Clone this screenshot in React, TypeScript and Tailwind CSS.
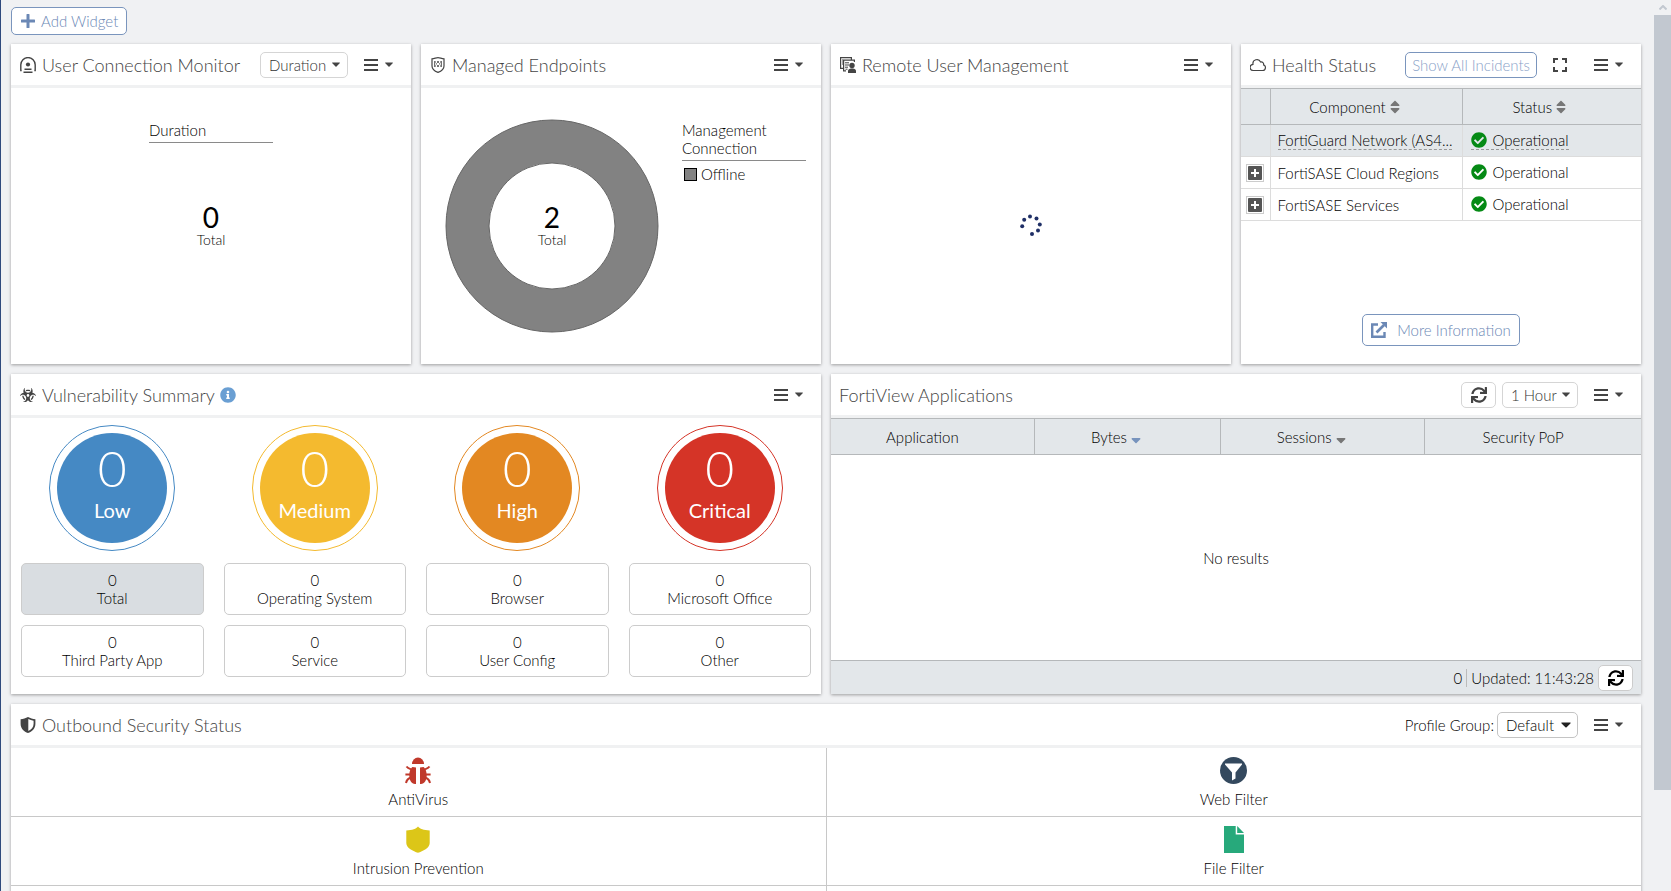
import React from "react";

import {
  FaBiohazard,
  FaCheckCircle,
  FaInfoCircle,
  FaSort,
  FaSortDown,
  FaSync,
} from "react-icons/fa";

type TIconProps = {
  className?: string;
};

type TWidgetProps = {
  title: string;
  icon?: React.ReactNode;
  info?: boolean;
  className?: string;
  actions?: React.ReactNode;
  children: React.ReactNode;
};

type TSelectBoxProps = {
  id: string;
  label: string;
  value: string;
  dark?: boolean;
};

const severities = [
  { name: "Low", ring: "border-[#4589c4]", fill: "bg-[#4589c4]" },
  { name: "Medium", ring: "border-[#f4ba2f]", fill: "bg-[#f4ba2f]" },
  { name: "High", ring: "border-[#e38822]", fill: "bg-[#e38822]" },
  { name: "Critical", ring: "border-[#d53427]", fill: "bg-[#d53427]" },
];

const categories = [
  "Total",
  "Operating System",
  "Browser",
  "Microsoft Office",
  "Third Party App",
  "Service",
  "User Config",
  "Other",
];

const components = [
  { name: "FortiGuard Network (AS4...", expandable: false },
  { name: "FortiSASE Cloud Regions", expandable: true },
  { name: "FortiSASE Services", expandable: true },
];

const Caret = ({ className }: TIconProps) => (
  <svg viewBox="0 0 8 5" className={className} fill="currentColor">
    <path d="M0.6 0.5h6.8c.5 0 .6.4.3.7L4.5 4.4c-.3.3-.7.3-1 0L.3 1.2C0 .9.1.5.6.5z" />
  </svg>
);

const MonitorIcon = () => (
  <svg viewBox="0 0 16 16" className="size-4" fill="none" stroke="currentColor">
    <path
      d="M1.7 13.500H.8V7.800a7.200 7.200 0 0 1 14.400 0v5.700h-.9"
      strokeWidth="1.400"
    />
    <circle cx="8" cy="7.500" r="2.100" fill="currentColor" stroke="none" />
    <path d="M4.500 12.300h7M3.500 15.200h9" strokeWidth="1.400" />
  </svg>
);

const EndpointIcon = () => (
  <svg viewBox="0 0 16 16" className="size-4" fill="none" stroke="currentColor">
    <path
      d="M2 1.800C4.500 1.500 6.500.6 8 .6s3.500.9 6 1.200V9c0 3-3 5.300-6 6.400C5 14.300 2 12 2 9z"
      strokeWidth="1.200"
    />
    <path
      d="M4 5h1.700M7 5h2M10.300 5H12M4 7h1.200M10.800 7H12M4 9h1.700M7 9h2M10.300 9H12M6.200 6.800h.8M9 6.800h.8"
      strokeWidth="1.300"
    />
  </svg>
);

const RemoteUserIcon = () => (
  <svg viewBox="0 0 16 16" className="size-4" fill="none" stroke="currentColor">
    <path d="M3 11.400H.6V.6h10.800V3" strokeWidth="1.200" />
    <path d="M6 13.800H3.600V3.200H14.400V5" strokeWidth="1.200" />
    <path d="M2 3h1M2 5h1M2 7h1M5 5.800h4M5 8h4M5 10.200h3M5.500 12.200h2" />
    <circle cx="12" cy="8.500" r="2.700" fill="currentColor" stroke="none" />
    <path
      d="M8 16v-2c0-1.600 1.500-2.500 3-2.500h2c1.500 0 3 .9 3 2.500v2z"
      fill="currentColor"
      stroke="none"
    />
  </svg>
);

const CloudIcon = () => (
  <svg viewBox="0 0 16 16" className="size-4" fill="none" stroke="currentColor">
    <path
      d="M3.400 13.500h9.200a2.900 2.900 0 0 0 1-5.600 2.400 2.400 0 0 0-3-2.900A4 4 0 0 0 3 7.300a3.100 3.100 0 0 0 .4 6.200z"
      strokeWidth="1.200"
    />
  </svg>
);

const ShieldHalfIcon = () => (
  <svg viewBox="0 0 16 16" className="size-4" fill="currentColor">
    <path
      fillRule="evenodd"
      d="M8 0c2.300 1.300 4.800 2 7.400 2.200v4.600C15.400 11.500 12 14.700 8 16 4 14.700.6 11.500.6 6.800V2.200C3.200 2 5.700 1.300 8 0zm.3 2v12c3-1.300 5.300-3.800 5.300-7.200V3.700C11.700 3.500 10 2.900 8.300 2z"
    />
  </svg>
);

const PlusIcon = () => (
  <svg viewBox="0 0 14 14" className="size-3.5" fill="currentColor">
    <path d="M5.500.5q0-.5.500-.5h2q.5 0 .5.500v5h5q.5 0 .5.500v2q0 .5-.5.500h-5v5q0 .5-.5.500H6q-.5 0-.5-.5v-5h-5Q0 8.500 0 8V6q0-.5.500-.5h5z" />
  </svg>
);

const ExternalIcon = () => (
  <svg viewBox="0 0 16 16" className="size-4" fill="none" stroke="currentColor">
    <path d="M7 2.500H1.200v12.300h12.300V10" strokeWidth="2.400" />
    <path d="M5.500 10.500l7.500-7.500" strokeWidth="2.600" />
    <path d="M9.500 0H16v6.500z" fill="currentColor" stroke="none" />
  </svg>
);

const ExpandIcon = () => (
  <svg viewBox="0 0 14 14" className="size-3.5" fill="none" stroke="currentColor">
    <path d="M1 5V1h4M9 1h4v4M13 9v4H9M5 13H1V9" strokeWidth="2" />
  </svg>
);

const BugIcon = () => (
  <svg viewBox="0 0 26 27" className="h-[27px] w-[26px]" fill="#c0392b">
    <path d="M7 7a6 6.500 0 0 1 12 0z" />
    <path d="M11 10.500V27H10C6.500 27 4.300 23 4.300 18.500c0-4 1.500-7.600 3.200-8.500zM15 10.500V27h1c3.500 0 5.700-4 5.700-8.500 0-4-1.500-7.600-3.200-8.500z" />
    <path
      d="M1.500 9.500c1.500 2 3 2.300 4.500 2.800M.4 17.500H5M6 20.500c-3 1-4.500 3-5 5.500M24.500 9.500c-1.500 2-3 2.300-4.500 2.800M25.600 17.500H21M20 20.500c3 1 4.500 3 5 5.500"
      fill="none"
      stroke="#c0392b"
      strokeWidth="2"
    />
  </svg>
);

const FunnelIcon = () => (
  <svg viewBox="0 0 27 27" className="size-[27px]">
    <circle cx="13.500" cy="13.500" r="13.500" fill="#34495e" />
    <path d="M5 6.500h17v1l-6.500 8v6L12 23.500v-8L5 7.500z" fill="#fff" />
  </svg>
);

const ShieldIcon = () => (
  <svg viewBox="0 0 24 27" className="h-[27px] w-6" fill="#dcc618">
    <path d="M12 .5c1.500 2.300 6 3.600 11.700 4V17c0 5-7 8.300-11.700 9.800C7.300 25.300.3 22 .3 17V4.500C6 4.100 10.500 2.800 12 .5z" />
  </svg>
);

const FileIcon = () => (
  <svg viewBox="0 0 20 27" className="h-[27px] w-5" fill="#27a97b">
    <path d="M0 0h11.700v8.500H20V27H0z" />
    <path d="M13.200 0L20 7H13.200z" />
  </svg>
);

const Spinner = () => (
  <svg viewBox="-12 -12 24 24" className="size-6" fill="#1f2f66">
    <circle cx="-1" cy="-9.500" r="2" />
    <circle cx="5.500" cy="-7.500" r="2" />
    <circle cx="8.800" cy="-1.600" r="2" />
    <circle cx="7" cy="4.600" r="2" />
    <circle cx="1" cy="8" r="2" />
    <circle cx="-8.800" cy="0.200" r="2" />
    <circle cx="-6.800" cy="-6.200" r="2" />
  </svg>
);

const MenuButton = () => (
  <button
    type="button"
    aria-label="Widget menu"
    className="flex items-center gap-[7px] text-[#444]"
  >
    <svg viewBox="0 0 14 12" className="h-3 w-3.5" fill="currentColor">
      <path d="M0 0h14v2H0zM0 5h14v2H0zM0 10h14v2H0z" />
    </svg>
    <Caret className="h-[5px] w-2" />
  </button>
);

const SelectBox = ({ id, label, value, dark }: TSelectBoxProps) => (
  <span className="relative flex items-center">
    <select
      id={id}
      aria-label={label}
      defaultValue={value}
      className={`h-[26px] appearance-none rounded-[5px] border bg-white pl-2 text-[15px] ${
        dark
          ? "border-[#c4c4c4] pr-[22px] text-black"
          : "border-[#d5d5d5] pr-5 text-[#333]"
      }`}
    >
      <option>{value}</option>
    </select>
    <Caret
      className={`pointer-events-none absolute ${
        dark
          ? "right-[7px] h-[6px] w-2.5 text-[#222]"
          : "right-2 h-[5px] w-2 text-[#444]"
      }`}
    />
  </span>
);

const Widget = ({
  title,
  icon,
  info,
  className = "",
  actions,
  children,
}: TWidgetProps) => (
  <section
    className={`flex flex-col bg-white shadow-[0_1px_3px_rgba(0,0,0,0.35)] ${className}`}
  >
    <header className="flex h-11 shrink-0 items-center border-b-[3px] border-[#f0f1f2] pr-[18px] pl-2 text-[#444]">
      {icon && <span className="mr-1.5 ml-px flex">{icon}</span>}
      <h2 className="text-lg leading-6 whitespace-nowrap">{title}</h2>
      {info && <FaInfoCircle className="ml-[5px] size-4 text-[#6a9fd3]" />}
      <div className="ml-auto flex items-center gap-4">
        {actions}
        <MenuButton />
      </div>
    </header>
    {children}
  </section>
);

const Total = ({ value }: { value: number }) => (
  <div className="flex flex-col items-center">
    <span className="text-[28px] leading-7 font-normal">{value}</span>
    <span className="text-sm leading-[18px]">Total</span>
  </div>
);

const HealthTable = () => (
  <table className="w-full table-fixed border-collapse text-left">
    <colgroup>
      <col className="w-[29px]" />
      <col className="w-[192px]" />
      <col />
    </colgroup>
    <thead>
      <tr className="h-9 border-y border-[#b5b8ba] bg-[#e3e7ea]">
        <th className="border-r border-[#b5b8ba]" aria-label="Expand" />
        <th className="border-r border-[#b5b8ba] font-light">
          <span className="flex items-center justify-center gap-px pr-5">
            Component
            <FaSort className="size-4 text-[#777]" />
          </span>
        </th>
        <th className="font-light">
          <span className="flex items-center justify-center gap-px pr-[22px]">
            Status
            <FaSort className="size-4 text-[#777]" />
          </span>
        </th>
      </tr>
    </thead>
    <tbody>
      {components.map((item) => (
        <tr
          key={item.name}
          className={`h-8 border-b border-[#dcdcdc] ${
            item.expandable ? "" : "bg-[#e3e7ea]"
          }`}
        >
          <td className="border-r border-[#dcdcdc]">
            {item.expandable && (
              <button
                type="button"
                aria-label={`Expand ${item.name}`}
                className="mx-auto flex size-[18px] items-center justify-center border border-[#ccc] bg-white"
              >
                <svg viewBox="0 0 14 14" className="size-3.5">
                  <rect width="14" height="14" rx="1" fill="#555" />
                  <path d="M7 3v8M3 7h8" stroke="#fff" strokeWidth="2" />
                </svg>
              </button>
            )}
          </td>
          <td className="border-r border-[#dcdcdc] pl-[7px]">
            <span
              className={`inline-block leading-[18px] whitespace-nowrap ${
                item.expandable ? "" : "border-b border-dashed border-[#999]"
              }`}
            >
              {item.name}
            </span>
          </td>
          <td className="px-2">
            <span
              className={`inline-flex items-center gap-1.5 leading-[18px] ${
                item.expandable ? "" : "border-b border-dashed border-[#999]"
              }`}
            >
              <FaCheckCircle className="size-4 text-[#058a15]" />
              Operational
            </span>
          </td>
        </tr>
      ))}
    </tbody>
  </table>
);

const ApplicationsTable = () => (
  <table className="w-full table-fixed border-collapse">
    <colgroup>
      <col className="w-[25.100%]" />
      <col className="w-[23%]" />
      <col className="w-[25.200%]" />
      <col />
    </colgroup>
    <thead>
      <tr className="h-9 border-y border-[#b5b8ba] bg-[#e3e7ea]">
        <th className="border-r border-[#b5b8ba] pr-5 font-light">
          Application
        </th>
        <th className="border-r border-[#b5b8ba] font-light">
          <span className="flex items-center justify-center gap-px pr-5">
            Bytes
            <FaSortDown className="size-4 text-[#7793bd]" />
          </span>
        </th>
        <th className="border-r border-[#b5b8ba] font-light">
          <span className="flex items-center justify-center gap-px pr-5">
            Sessions
            <FaSortDown className="size-4 text-[#777]" />
          </span>
        </th>
        <th className="pr-5 font-light">Security PoP</th>
      </tr>
    </thead>
  </table>
);

const App = () => {
  const outlined =
    "flex items-center rounded-[5px] border border-[#7a95bd] bg-white";

  return (
    <div className="flex h-screen overflow-hidden border-l border-[#2f4a7d] bg-[#f0f1f3] font-['Lato','Noto_Sans',sans-serif] text-[15px] leading-[18px] font-light text-black">
      <main className="flex-1 pt-[7px] pr-[13px] pl-[10px]">
        <button
          type="button"
          className={`${outlined} h-7 gap-1.5 pr-2 pl-[9px] text-[#6b88b5]`}
        >
          <PlusIcon />
          Add Widget
        </button>

        <div className="mt-[9px] grid grid-cols-4 gap-2.5">
          <Widget
            title="User Connection Monitor"
            icon={<MonitorIcon />}
            className="min-h-80"
            actions={
              <SelectBox id="monitor-by" label="Monitor by" value="Duration" />
            }
          >
            <div className="flex flex-col items-center pt-[33px]">
              <h3 className="w-[124px] border-b border-[#8a8a8a] pb-[3px]">
                Duration
              </h3>
              <div className="mt-[60px]">
                <Total value={0} />
              </div>
            </div>
          </Widget>

          <Widget title="Managed Endpoints" icon={<EndpointIcon />}>
            <div className="flex flex-1 items-center justify-between pr-[15px] pl-6">
              <div className="grid place-items-center">
                <svg
                  viewBox="0 0 214 214"
                  className="col-start-1 row-start-1 size-[214px]"
                  aria-label="Offline endpoints"
                >
                  <circle
                    cx="107"
                    cy="107"
                    r="84.500"
                    fill="none"
                    stroke="#828282"
                    strokeWidth="43"
                  />
                  <g fill="none" stroke="#666">
                    <circle cx="107" cy="107" r="106" />
                    <circle cx="107" cy="107" r="63" />
                  </g>
                </svg>
                <div className="col-start-1 row-start-1">
                  <Total value={2} />
                </div>
              </div>
              <div className="w-[124px] self-start pt-[33px]">
                <h3 className="border-b border-[#8a8a8a] pb-[3px]">
                  Management Connection
                </h3>
                <p className="mt-1 flex items-center gap-1 pl-0.5">
                  <span className="size-[13px] border border-black bg-[#828282]" />
                  Offline
                </p>
              </div>
            </div>
          </Widget>

          <Widget title="Remote User Management" icon={<RemoteUserIcon />}>
            <div className="flex flex-1 items-center justify-center">
              <Spinner />
            </div>
          </Widget>

          <Widget
            title="Health Status"
            icon={<CloudIcon />}
            actions={
              <>
                <button
                  type="button"
                  className={`${outlined} h-[26px] px-1.5 whitespace-nowrap text-[#8aa2c8]`}
                >
                  Show All Incidents
                </button>
                <button type="button" aria-label="Expand" className="mr-[11px]">
                  <ExpandIcon />
                </button>
              </>
            }
          >
            <HealthTable />
            <div className="mt-auto flex justify-center pb-[18px]">
              <button
                type="button"
                className={`${outlined} h-8 gap-2.5 px-2 text-[#6b88b5]`}
              >
                <ExternalIcon />
                More Information
              </button>
            </div>
          </Widget>

          <Widget
            title="Vulnerability Summary"
            icon={<FaBiohazard className="size-4" />}
            info
            className="col-span-2 min-h-80"
          >
            <div className="grid grid-cols-4 gap-x-5 gap-y-2.5 px-2.5 pt-[7px]">
              {severities.map((item) => (
                <div
                  key={item.name}
                  className={`mx-auto mb-0.5 size-[126px] rounded-full border p-[7px] ${item.ring}`}
                >
                  <div
                    className={`flex size-full flex-col items-center rounded-full pt-[11px] text-white ${item.fill}`}
                  >
                    <span className="text-[50px] leading-[48px]">0</span>
                    <span className="mt-1.5 text-xl leading-6 font-normal">
                      {item.name}
                    </span>
                  </div>
                </div>
              ))}
              {categories.map((name) => (
                <button
                  key={name}
                  type="button"
                  className={`h-[52px] rounded-[5px] border border-[#ccc] ${
                    name === "Total" ? "bg-[#d9dde1]" : "bg-white"
                  }`}
                >
                  <span className="block">0</span>
                  <span className="block">{name}</span>
                </button>
              ))}
            </div>
          </Widget>

          <Widget
            title="FortiView Applications"
            className="col-span-2"
            actions={
              <div className="flex gap-1.5">
                <button
                  type="button"
                  aria-label="Refresh"
                  className="flex h-[26px] w-[35px] items-center justify-center rounded-[5px] border border-[#d5d5d5]"
                >
                  <FaSync className="size-4" />
                </button>
                <SelectBox id="period" label="Period" value="1 Hour" />
              </div>
            }
          >
            <ApplicationsTable />
            <p className="flex flex-1 items-center justify-center">No results</p>
            <footer className="flex h-[34px] items-center justify-end border-t border-[#b5b8ba] bg-[#e3e7ea] pr-2">
              <span className="border-r border-[#bbb] pr-1">0</span>
              <span className="pl-1">Updated: 11:43:28</span>
              <button
                type="button"
                aria-label="Refresh results"
                className="ml-1 flex h-[26px] w-[35px] items-center justify-center rounded-[5px] border border-[#ccc] bg-white"
              >
                <FaSync className="size-4" />
              </button>
            </footer>
          </Widget>

          <Widget
            title="Outbound Security Status"
            icon={<ShieldHalfIcon />}
            className="col-span-4"
            actions={
              <div className="flex items-center gap-[3px] text-black">
                <label htmlFor="profile-group">Profile Group:</label>
                <SelectBox
                  id="profile-group"
                  label="Profile Group"
                  value="Default"
                  dark
                />
              </div>
            }
          >
            <div className="grid auto-rows-[68px] grid-cols-2 gap-px bg-[#c8c8c8]">
              {[
                { name: "AntiVirus", icon: <BugIcon /> },
                { name: "Web Filter", icon: <FunnelIcon /> },
                { name: "Intrusion Prevention", icon: <ShieldIcon /> },
                { name: "File Filter", icon: <FileIcon /> },
              ].map((item) => (
                <div
                  key={item.name}
                  className="flex flex-col items-center gap-1.5 bg-white pt-[9px]"
                >
                  {item.icon}
                  {item.name}
                </div>
              ))}
              <div className="bg-white" />
              <div className="bg-white" />
            </div>
          </Widget>
        </div>
      </main>

      <div className="flex w-[17px] shrink-0 flex-col items-center bg-[#f0f1f3]">
        <svg
          viewBox="0 0 8 5"
          className="my-[5px] h-[5px] w-2 shrink-0"
          fill="none"
          stroke="#c2c8d0"
          strokeWidth="2"
        >
          <path d="M.5 4.500L4 1l3.500 3.500" />
        </svg>
        <div className="h-[87%] w-full bg-[#c2c8d0]" />
      </div>
    </div>
  );
};

export default App;
